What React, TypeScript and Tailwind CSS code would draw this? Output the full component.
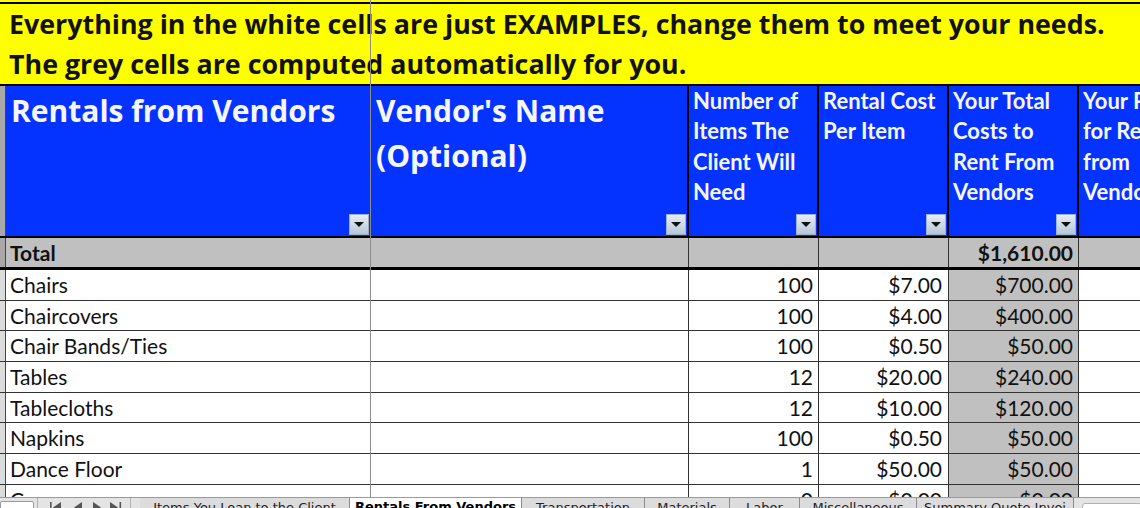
import React from 'react';

const rows = [
  { item: 'Chairs', qty: '100', cost: '$7.00', total: '$700.00' },
  { item: 'Chaircovers', qty: '100', cost: '$4.00', total: '$400.00' },
  { item: 'Chair Bands/Ties', qty: '100', cost: '$0.50', total: '$50.00' },
  { item: 'Tables', qty: '12', cost: '$20.00', total: '$240.00' },
  { item: 'Tablecloths', qty: '12', cost: '$10.00', total: '$120.00' },
  { item: 'Napkins', qty: '100', cost: '$0.50', total: '$50.00' },
  { item: 'Dance Floor', qty: '1', cost: '$50.00', total: '$50.00' },
  { item: 'Canopy', qty: '0', cost: '$0.00', total: '$0.00' },
];

const tabs = [
  { label: 'Items You Loan to the Client', width: 'w-[210px]' },
  { label: 'Rentals From Vendors', width: 'w-[172px]', active: true },
  { label: 'Transportation', width: 'w-[123px]' },
  { label: 'Materials', width: 'w-[85px]' },
  { label: 'Labor', width: 'w-[70px]' },
  { label: 'Miscellaneous', width: 'w-[117px]' },
  { label: 'Summary Quote Invoi', width: 'w-[157px]' },
];

function FilterButton() {
  return (
    <div className="mt-auto self-end mb-[1px] mr-[1px] w-[20px] h-[21px] shrink-0 flex items-center justify-center border border-[#9db2c6] bg-linear-to-b from-[#e4ecf4] to-[#b7c8da]">
      <span className="w-0 h-0 border-l-[5px] border-r-[5px] border-t-[5px] border-l-transparent border-r-transparent border-t-[#111]" />
    </div>
  );
}

function NavArrows() {
  return (
    <svg width="84" height="11" viewBox="0 0 84 11" className="mt-[4px]">
      <g fill="#555">
        <rect x="10" y="0" width="1.6" height="11" />
        <path d="M13 5.5 L21 0 L21 11 Z" />
        <path d="M34 5.5 L42 0 L42 11 Z" />
        <path d="M61 5.5 L53 0 L53 11 Z" />
        <path d="M78 5.5 L70 0 L70 11 Z" />
        <rect x="79.5" y="0" width="1.6" height="11" />
      </g>
    </svg>
  );
}

export default function App() {
  return (
    <div className="w-[1140px] h-[508px] overflow-hidden flex flex-col bg-white font-['Lato',sans-serif] text-[#111]">
      <div className="relative h-[497px] shrink-0 overflow-hidden">
        {/* instructions band */}
        <div className="bg-[#ffff00]">
          <div className="h-[2px]" />
          <div className="h-[84px] border-t-2 border-b-2 border-black pl-[9px] font-['Open_Sans',sans-serif] text-[26.8px] font-bold leading-[40px] whitespace-nowrap">
            <div>Everything in the white cells are just EXAMPLES, change them to meet your needs.</div>
            <div>The grey cells are computed automatically for you.</div>
          </div>
        </div>

        {/* header row */}
        <div className="flex h-[152px] border-b-2 border-black bg-[#0433ff] text-[#f6f6ff] font-bold">
          <div className="w-[6px] shrink-0 bg-[#a8a8a8] border-r border-[#444]" />
          <div className="w-[365px] shrink-0 flex flex-col border-r border-[#8a8a8a]">
            <div className="pl-[5px] pt-[2px] font-['Open_Sans',sans-serif] text-[30px] leading-[45px] whitespace-nowrap">
              Rentals from Vendors
            </div>
            <FilterButton />
          </div>
          <div className="w-[318px] shrink-0 flex flex-col border-r-2 border-black">
            <div className="pl-[5px] pt-[2px] font-['Open_Sans',sans-serif] text-[30px] leading-[45px] whitespace-nowrap">
              Vendor's Name
              <br />
              (Optional)
            </div>
            <FilterButton />
          </div>
          <div className="w-[130px] shrink-0 flex flex-col border-r-2 border-black">
            <div className="pl-[4px] text-[22px] leading-[30.3px] whitespace-nowrap">
              Number of
              <br />
              Items The
              <br />
              Client Will
              <br />
              Need
            </div>
            <FilterButton />
          </div>
          <div className="w-[130px] shrink-0 flex flex-col border-r-2 border-black">
            <div className="pl-[4px] text-[22px] leading-[30.3px] whitespace-nowrap">
              Rental Cost
              <br />
              Per Item
            </div>
            <FilterButton />
          </div>
          <div className="w-[130px] shrink-0 flex flex-col border-r-2 border-black">
            <div className="pl-[4px] text-[22px] leading-[30.3px] whitespace-nowrap">
              Your Total
              <br />
              Costs to
              <br />
              Rent From
              <br />
              Vendors
            </div>
            <FilterButton />
          </div>
          <div className="w-[130px] shrink-0 flex flex-col">
            <div className="pl-[4px] text-[22px] leading-[30.3px] whitespace-nowrap">
              Your Price
              <br />
              for Rentals
              <br />
              from
              <br />
              Vendors
            </div>
          </div>
        </div>

        {/* total row */}
        <div className="flex h-[32px] border-b-[3px] border-black bg-[#c0c0c0] text-[21px] font-bold leading-[29px]">
          <div className="w-[6px] shrink-0 bg-[#a8a8a8] border-r border-[#444]" />
          <div className="w-[365px] shrink-0 pl-[4px] border-r border-[#8a8a8a]">Total</div>
          <div className="w-[318px] shrink-0 border-r border-[#333]" />
          <div className="w-[130px] shrink-0 border-r border-[#333]" />
          <div className="w-[130px] shrink-0 border-r border-[#333]" />
          <div className="w-[130px] shrink-0 text-right pr-[5px] border-r border-[#333]">$1,610.00</div>
          <div className="w-[130px] shrink-0" />
        </div>

        {/* data rows */}
        {rows.map((r) => (
          <div key={r.item} className="flex h-[30.7px] border-b border-[#333] text-[21px] leading-[30px]">
            <div className="w-[6px] shrink-0 bg-[#dcdcdc] border-r border-[#444]" />
            <div className="w-[365px] shrink-0 pl-[4px] border-r border-[#8a8a8a] whitespace-nowrap">{r.item}</div>
            <div className="w-[318px] shrink-0 border-r border-[#333]" />
            <div className="w-[130px] shrink-0 text-right pr-[5px] border-r border-[#333]">{r.qty}</div>
            <div className="w-[130px] shrink-0 text-right pr-[6px] border-r border-[#333]">{r.cost}</div>
            <div className="w-[130px] shrink-0 text-right pr-[5px] bg-[#c0c0c0] border-r border-[#333]">{r.total}</div>
            <div className="w-[130px] shrink-0" />
          </div>
        ))}

        {/* frozen pane divider */}
        <div className="absolute left-[370px] top-0 bottom-0 w-px bg-[#8c8c8c]" />
      </div>

      {/* sheet tabs */}
      <div className="flex-1 flex items-start border-t border-[#9a9a9a] bg-[#e4e4e4] font-['DejaVu_Sans',sans-serif] text-[13px] text-[#222] overflow-hidden">
        <div className="w-[34px] h-[16px] mt-[3px] shrink-0 bg-white border border-[#9a9a9a] rounded-[2px]" />
        <div className="w-[94px] h-[16px] shrink-0 border-l border-r border-[#b0b0b0] ml-[3px] pl-[2px]">
          <NavArrows />
        </div>
        <div className="w-[9px] shrink-0" />
        {tabs.map((t) => (
          <div
            key={t.label}
            className={`${t.width} h-[18px] shrink-0 border-r border-[#8a8a8a] text-center leading-[20px] whitespace-nowrap overflow-hidden ${
              t.active ? 'bg-white font-bold text-black -mt-px' : 'bg-[#dcdcdc]'
            }`}
          >
            {t.label}
          </div>
        ))}
        <div className="w-[60px] h-[16px] mt-[5px] ml-[8px] shrink-0 bg-white border border-[#b0b0b0] rounded-[3px]" />
      </div>
    </div>
  );
}
